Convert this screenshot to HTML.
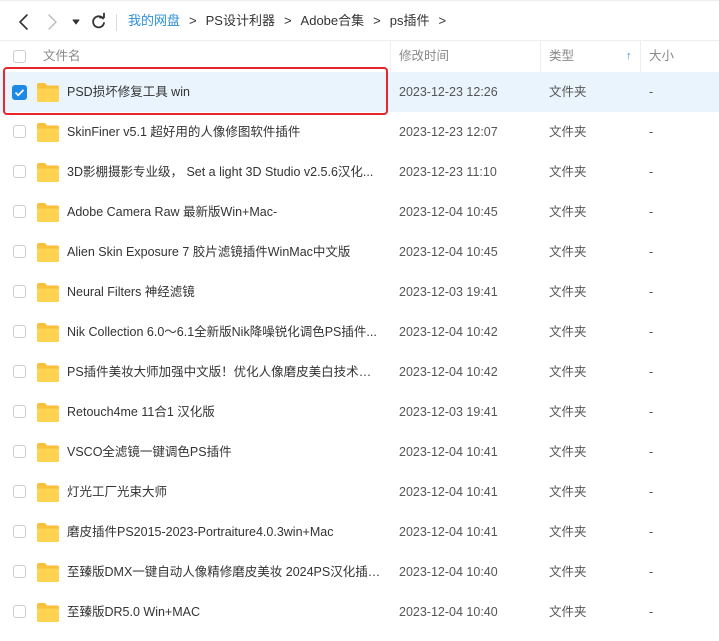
<!DOCTYPE html><html><head><meta charset="utf-8"><style>
body{margin:0;width:719px;height:641px;background:#fff;font-family:"Liberation Sans","Noto Sans CJK SC",sans-serif;color:#333;overflow:hidden;position:relative}
.a{position:absolute}
span{line-height:18px}
.top{top:0;left:0;width:719px;height:41px;border-bottom:1px solid #eee;border-top:1px solid #eee;box-sizing:border-box}
.bc{top:12px;left:128px;font-size:13px;color:#333;white-space:nowrap;line-height:18px}
.bc span.l{color:#2b8fd8}
.bc b{font-weight:normal;margin:0 9px;color:#333}
.hd{top:41px;left:0;width:719px;height:31px;font-size:12.5px;color:#888}
.sep{top:41px;width:1px;height:31px;background:#eee}
.row{left:0;width:719px;height:40px;font-size:12.5px}
.cb{position:absolute;left:13px;top:13px;width:13px;height:13px;border:1px solid #ccc;border-radius:3px;box-sizing:border-box;background:#fff}
.fd{position:absolute;left:37px;top:11px}
.nm{position:absolute;left:67px;top:11px;color:#333;white-space:nowrap;max-width:314px;overflow:hidden;text-overflow:ellipsis}
.tm{position:absolute;left:399px;top:11px;color:#555}
.ty{position:absolute;left:549px;top:11px;color:#555}
.sz{position:absolute;left:649px;top:11px;color:#555}
</style></head><body>
<div class="a top"></div>
<svg class="a" style="left:14px;top:12px" width="100" height="20" viewBox="0 0 100 20" fill="none" stroke-linecap="round" stroke-linejoin="round">
<path d="M13 3L6 10l7 7" stroke="#333" stroke-width="1.6"/>
<path d="M35 3l7 7-7 7" stroke="#bbb" stroke-width="1.4"/>
<path d="M59 8h6l-3 4z" fill="#333" stroke="#333" stroke-width="1"/>
<path d="M89 6.5A5.5 5.5 0 1 0 90 11" stroke="#333" stroke-width="1.8"/>
<path d="M86 5.5h4v-4" stroke="#333" stroke-width="1.8"/>
</svg>
<div class="a" style="left:116px;top:14px;width:1px;height:17px;background:#ddd"></div>
<div class="a bc"><span class="l">我的网盘</span><b>&gt;</b>PS设计利器<b>&gt;</b>Adobe合集<b>&gt;</b>ps插件<b>&gt;</b></div>
<div class="a hd">
<div class="cb" style="top:9px"></div>
<span class="a" style="left:43px;top:6px">文件名</span>
<span class="a" style="left:399px;top:6px">修改时间</span>
<span class="a" style="left:549px;top:6px">类型</span>
<span class="a" style="left:626px;top:6px;color:#2b8fd8;font-size:11px;font-weight:bold">↑</span>
<span class="a" style="left:649px;top:6px">大小</span>
</div>
<div class="a sep" style="left:390px"></div><div class="a sep" style="left:540px"></div><div class="a sep" style="left:640px"></div>
<div class="a" style="left:0;top:72px;width:719px;height:40px;background:#e9f4fd"></div>
<div id="rows"></div>
<div class="a" style="left:3px;top:67px;width:385px;height:48px;border:2px solid #e8262b;border-radius:4px;box-sizing:border-box"></div>
<script>
var d=[["PSD损坏修复工具 win","2023-12-23 12:26"],["SkinFiner v5.1 超好用的人像修图软件插件","2023-12-23 12:07"],["3D影棚摄影专业级， Set a light 3D Studio v2.5.6汉化...","2023-12-23 11:10"],["Adobe Camera Raw 最新版Win+Mac-","2023-12-04 10:45"],["Alien Skin Exposure 7 胶片滤镜插件WinMac中文版","2023-12-04 10:45"],["Neural Filters 神经滤镜","2023-12-03 19:41"],["Nik Collection 6.0～6.1全新版Nik降噪锐化调色PS插件...","2023-12-04 10:42"],["PS插件美妆大师加强中文版！优化人像磨皮美白技术，助...","2023-12-04 10:42"],["Retouch4me 11合1 汉化版","2023-12-03 19:41"],["VSCO全滤镜一键调色PS插件","2023-12-04 10:41"],["灯光工厂光束大师","2023-12-04 10:41"],["磨皮插件PS2015-2023-Portraiture4.0.3win+Mac","2023-12-04 10:41"],["至臻版DMX一键自动人像精修磨皮美妆 2024PS汉化插件...","2023-12-04 10:40"],["至臻版DR5.0 Win+MAC","2023-12-04 10:40"]];
var h="";d.forEach(function(r,i){
var cb=i==0?'<svg style="position:absolute;left:12px;top:13px" width="15" height="15"><rect width="15" height="15" rx="3" fill="#1e88e5"/><path d="M3.5 7.5l2.7 2.7 5.3-5.3" stroke="#fff" stroke-width="1.8" fill="none"/></svg>':'<div class="cb"></div>';
h+='<div class="a row" style="top:'+(72+i*40)+'px">'+cb+'<svg class="fd" width="22" height="19" viewBox="0 0 22 19"><path d="M0 2a2 2 0 0 1 2-2h6l2 2.5h10a2 2 0 0 1 2 2V17a2 2 0 0 1-2 2H2a2 2 0 0 1-2-2z" fill="#f9c03c"/><path d="M0 5.5h22V17a2 2 0 0 1-2 2H2a2 2 0 0 1-2-2z" fill="#ffd251"/></svg><span class="nm">'+r[0]+'</span><span class="tm">'+r[1]+'</span><span class="ty">文件夹</span><span class="sz">-</span></div>';});
document.getElementById("rows").innerHTML=h;
</script>
</body></html>
